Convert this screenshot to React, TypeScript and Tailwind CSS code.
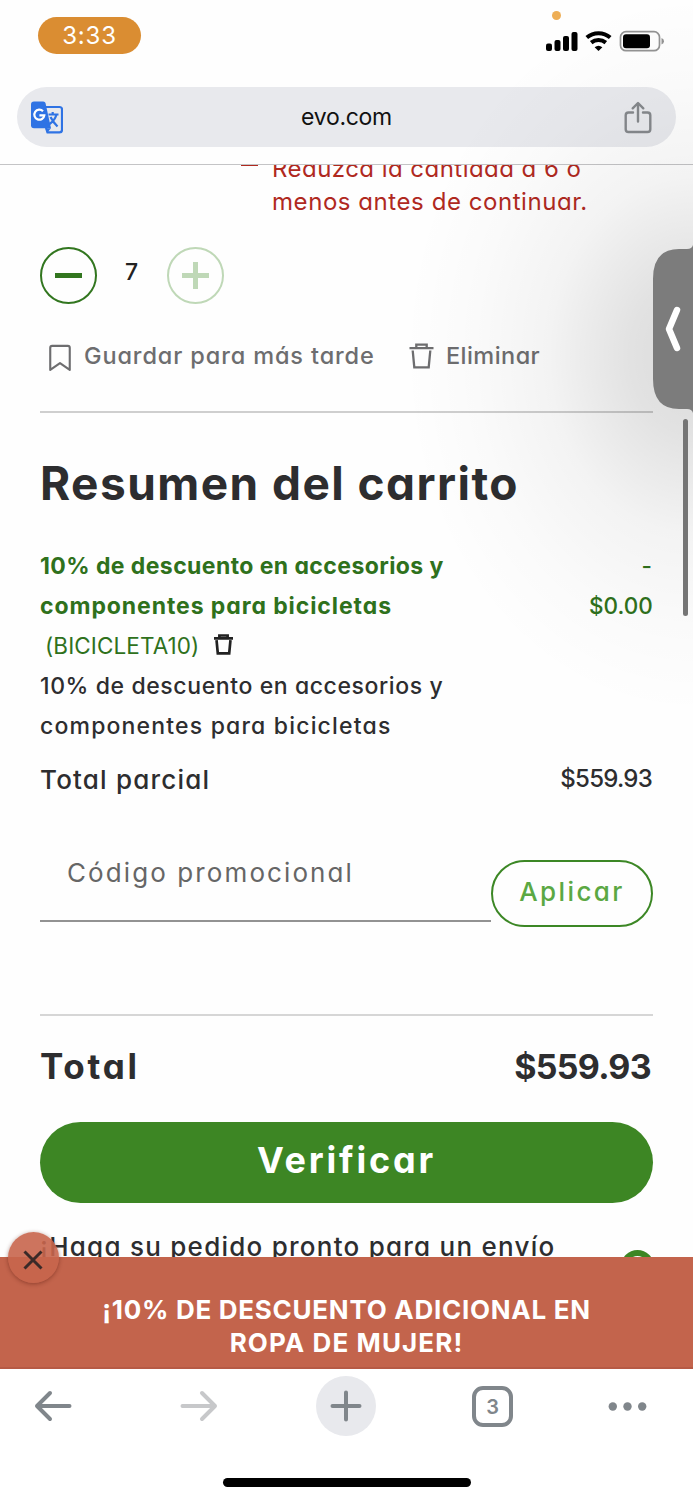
import React from 'react';

const StatusBar: React.FC = () => (
  <div className="relative flex h-[87px] shrink-0 items-start justify-between pl-[38px] pr-[28px]">
    <div className="mt-[17px] flex h-[37px] w-[103px] items-center justify-center rounded-full bg-[#da8d32] text-[24px] tracking-[0.8px] text-white">
      3:33
    </div>
    <span className="absolute left-[552px] top-[11px] h-[9px] w-[9px] rounded-full bg-[#eeae55]" />
    <div className="mt-[30px] flex items-center gap-[7px]">
      <svg width="33" height="22" viewBox="0 0 33 22">
        <rect x="1" y="13.5" width="6" height="7.5" rx="2" />
        <rect x="9.5" y="10" width="6" height="11" rx="2" />
        <rect x="18" y="6" width="6" height="15" rx="2" />
        <rect x="26.5" y="2" width="6" height="19" rx="2" />
      </svg>
      <svg width="27" height="22" viewBox="0 0 27 22" fill="none" stroke="#000" strokeWidth="4">
        <path d="M1.8 7.6C8.5 1.8 18.5 1.8 25.2 7.6" />
        <path d="M6.2 12.6C10.5 9.1 16.5 9.1 20.8 12.6" />
        <path d="M13.5 21L9.6 17.3Q13.5 14.3 17.4 17.3Z" fill="#000" stroke="none" />
      </svg>
      <svg width="46" height="22" viewBox="0 0 46 22">
        <rect x="1.5" y="1.7" width="39" height="19" rx="5.5" fill="none" stroke="#939393" strokeWidth="1.7" />
        <rect x="4" y="4.3" width="27" height="14" rx="3" />
        <path d="M42.5 8Q45 9 45 11.2Q45 13.4 42.5 14.4Z" fill="#939393" />
      </svg>
    </div>
  </div>
);

const AddressBar: React.FC = () => (
  <div className="h-[78px] shrink-0 border-b border-[#c4c4c6] px-[17px]">
    <div className="flex h-[60px] items-center justify-between rounded-full bg-[#e8e9ed] pl-[14px] pr-[24px]">
      <svg width="32" height="33" viewBox="0 0 32 33">
        <path d="M15 6H28.5Q31 6 31 8.5V28.8Q31 31.3 28.5 31.3H16.5L15 27" fill="#e8e9ed" stroke="#2f73e4" strokeWidth="2.2" />
        <path d="M3 .5H12.3Q14 .5 14.5 2L20 27.3H3Q0 27.3 0 24.3V3.5Q0 .5 3 .5Z" fill="#2f73e4" />
        <path d="M14.5 27.3H20L16 32Z" fill="#2f73e4" />
        <path d="M17.5 13.5H27.5M21.7 11V13.5M25.5 13.5Q23.8 19.5 18.5 23M19.5 16Q22 21 26.5 25.5" fill="none" stroke="#2f73e4" strokeWidth="2.2" />
        <path d="M12 10.3A5 5 0 1 0 13.3 14.3H8.4" fill="none" stroke="#fff" strokeWidth="2.2" />
      </svg>
      <span className="pl-[6px] text-[23px] tracking-[-0.3px] text-[#111]">evo.com</span>
      <svg width="28" height="33" viewBox="0 0 28 33" fill="none" stroke="#85888c" strokeWidth="2.4" strokeLinecap="round" strokeLinejoin="round">
        <path d="M9 11.5H4.5Q1.7 11.5 1.7 14.3V28.2Q1.7 31 4.5 31H23.5Q26.3 31 26.3 28.2V14.3Q26.3 11.5 23.5 11.5H19" />
        <path d="M14 20.5V2.5M8.7 7.3L14 2L19.3 7.3" />
      </svg>
    </div>
  </div>
);

const Trash: React.FC<{ className: string; stroke: number }> = ({ className, stroke }) => (
  <svg className={className} viewBox="0 0 24 26" fill="none" stroke="currentColor" strokeWidth={stroke}>
    <path d="M0 5.2H24M6.8 5.2V1.6H17.2V5.2M3.2 7.5L4.8 24.3H19.2L20.8 7.5" />
  </svg>
);

const CartItem: React.FC = () => (
  <section className="flex flex-col">
    <div className="relative -mt-[13px] ml-[232px] h-[66px] whitespace-nowrap text-[24px] leading-[33px] text-[#b0291f]">
      <span className="absolute -left-[31px] top-[12px] h-[2px] w-[17px] bg-[#b0291f]" />
      <p className="tracking-[0.46px]">Reduzca la cantidad a 6 o</p>
      <p className="tracking-[0.56px]">menos antes de continuar.</p>
    </div>
    <div className="mt-[29px] flex h-[57px] items-center">
      <button className="flex h-[57px] w-[57px] items-center justify-center rounded-full border-2 border-[#32761f]">
        <span className="h-[5px] w-[27px] bg-[#32761f]" />
      </button>
      <span className="-mt-[6px] w-[69px] text-center text-[23px] font-medium text-[#222]">7</span>
      <button className="ml-[1px] flex h-[57px] w-[57px] items-center justify-center rounded-full border-2 border-[#bfd8b7]">
        <svg width="27" height="27" viewBox="0 0 27 27" stroke="#bfd8b7" strokeWidth="5">
          <path d="M0 13.5H27M13.5 0V27" />
        </svg>
      </button>
    </div>
    <div className="mt-[37px] flex h-[30px] items-center pl-[9px] text-[23.5px] font-medium text-[#6d6d6f]">
      <svg className="mt-[3px]" width="22" height="28" viewBox="0 0 23 28" fill="none" stroke="currentColor" strokeWidth="2.2" strokeLinejoin="round">
        <path d="M1.3 26.5V3.3Q1.3 1.3 3.3 1.3H19.7Q21.7 1.3 21.7 3.3V26.5L11.5 19.3Z" />
      </svg>
      <span className="ml-[13px] w-[325px] whitespace-nowrap tracking-[0.88px]">Guardar para más tarde</span>
      <Trash className="h-[26px] w-[25px]" stroke={2.3} />
      <span className="ml-[12px] tracking-[0.45px]">Eliminar</span>
    </div>
    <hr className="mt-[40px] border-0 border-t-2 border-[#cfcfcf]" />
  </section>
);

const Summary: React.FC = () => (
  <section className="flex flex-col text-[#2d2d2f]">
    <h1 className="mt-[40px] h-[60px] whitespace-nowrap text-[46px] font-bold leading-[60px] tracking-[1.45px]">
      Resumen del carrito
    </h1>
    <div className="mt-[33px] flex justify-between text-[23px] leading-[40px]">
      <div className="whitespace-nowrap">
        <div className="font-bold text-[#2f711c]">
          <p className="tracking-[0.42px]">10% de descuento en accesorios y</p>
          <p className="tracking-[0.92px]">componentes para bicicletas</p>
        </div>
        <p className="flex items-center pl-[5px] text-[22.5px] text-[#2f711c]">
          <span className="tracking-[0.1px]">(BICICLETA10)</span>
          <Trash className="-mt-[4px] ml-[15px] h-[21px] w-[19px] text-[#222]" stroke={3.4} />
        </p>
        <div className="font-medium">
          <p className="tracking-[0.6px]">10% de descuento en accesorios y</p>
          <p className="tracking-[1.18px]">componentes para bicicletas</p>
        </div>
      </div>
      <div className="w-[64px] pr-[1px] text-right text-[22.5px] font-medium text-[#2f711c]">
        <p>-</p>
        <p>$0.00</p>
      </div>
    </div>
    <div className="mt-[13px] flex h-[40px] items-center justify-between text-[26px] font-medium">
      <span className="tracking-[1.2px]">Total parcial</span>
      <span className="pr-[1px] text-[24px] tracking-[-0.75px]">$559.93</span>
    </div>
    <div className="mt-[61px] flex h-[68px] items-start">
      <div className="h-[62px] w-[451px] border-b-2 border-[#929292] pl-[27px] text-[26px] leading-[25px] tracking-[2.1px] text-[#666]">
        Código promocional
      </div>
      <button className="h-[67px] w-[162px] rounded-full border-2 border-[#3c8725] pb-[4px] text-[26px] font-medium tracking-[2.4px] text-[#5ba843]">
        Aplicar
      </button>
    </div>
    <hr className="mt-[86px] border-0 border-t-2 border-[#d6d6d6]" />
    <div className="mt-[30px] flex h-[40px] items-center justify-between text-[35px] font-bold">
      <span className="tracking-[2.7px]">Total</span>
      <span className="pr-[2px] text-[34px] tracking-[-0.7px]">$559.93</span>
    </div>
    <button className="mt-[36px] h-[81px] rounded-full bg-[#3d8624] pb-[5px] text-[36px] font-bold tracking-[2.8px] text-white">
      Verificar
    </button>
    <div className="mt-[29px] flex h-[60px] items-start justify-between">
      <p className="whitespace-nowrap text-[26px] font-medium leading-[30px] tracking-[1.25px]">¡Haga su pedido pronto para un envío</p>
      <span className="-mr-[1px] mt-[18px] h-[33px] w-[33px] rounded-full border-[6px] border-[#3d8624]" />
    </div>
  </section>
);

const PromoBanner: React.FC = () => (
  <div className="relative flex h-[112px] shrink-0 flex-col items-center border-b-2 border-[#b65a45] bg-[#c3644c] pt-[36px] text-[26px] font-bold leading-[33px] text-white">
    <p className="whitespace-nowrap tracking-[0.73px]">¡10% DE DESCUENTO ADICIONAL EN</p>
    <p className="tracking-[1.1px]">ROPA DE MUJER!</p>
    <button className="absolute -top-[25px] left-[8px] flex h-[51px] w-[51px] items-center justify-center rounded-full bg-[#c8654d]/90 shadow-[0_1px_4px_rgba(80,20,10,0.45)]">
      <svg className="mr-[1px] mt-[4px]" width="20" height="20" viewBox="0 0 20 20" stroke="#3a2a28" strokeWidth="3">
        <path d="M1.5 1.5L18.5 18.5M18.5 1.5L1.5 18.5" />
      </svg>
    </button>
  </div>
);

const BottomBar: React.FC = () => (
  <nav className="relative h-[131px] shrink-0 bg-white pt-[7px]">
    <div className="flex h-[60px] items-center pl-[34px] text-[#80868b]">
      <svg width="38" height="32" viewBox="0 0 38 32" fill="none" stroke="currentColor" strokeWidth="4" strokeLinecap="round" strokeLinejoin="round">
        <path d="M35.5 16H3M16 3L3 16L16 29" />
      </svg>
      <svg className="ml-[108px]" width="38" height="32" viewBox="0 0 38 32" fill="none" stroke="#c7c8ca" strokeWidth="4" strokeLinecap="round" strokeLinejoin="round">
        <path d="M2.5 16H35M22 3L35 16L22 29" />
      </svg>
      <div className="ml-[98px] flex h-[60px] w-[60px] items-center justify-center rounded-full bg-[#e8e9ed]">
        <svg width="32" height="32" viewBox="0 0 32 32" stroke="currentColor" strokeWidth="4" strokeLinecap="round">
          <path d="M2.5 16H29.5M16 2.5V29.5" />
        </svg>
      </div>
      <div className="ml-[96px] flex h-[41px] w-[41px] items-center justify-center rounded-[11px] border-4 border-current pt-[2px] text-[20px] font-semibold">
        3
      </div>
      <svg className="ml-[95px]" width="39" height="9" viewBox="0 0 39 9" fill="currentColor">
        <circle cx="4.8" cy="4.5" r="4.2" />
        <circle cx="19.5" cy="4.5" r="4.2" />
        <circle cx="34.2" cy="4.5" r="4.2" />
      </svg>
    </div>
    <div className="mx-auto mt-[42px] h-[9px] w-[248px] rounded-full bg-black" />
  </nav>
);

const App: React.FC = () => {
  return (
    <div className="relative flex h-[1500px] w-[693px] flex-col overflow-hidden bg-[#fefefe] font-['Inter','Liberation_Sans',sans-serif] [font-feature-settings:'cv11']">
      <StatusBar />
      <AddressBar />
      <main className="min-h-0 flex-1 overflow-hidden px-[40px]">
        <CartItem />
        <Summary />
      </main>
      <PromoBanner />
      <BottomBar />

      {/* shade cast by the side handle */}
      <div className="pointer-events-none absolute right-0 top-0 h-[760px] w-[380px] bg-[radial-gradient(ellipse_290px_360px_at_100%_355px,rgba(0,0,0,0.14),rgba(0,0,0,0.11)_22%,rgba(0,0,0,0.045)_50%,rgba(0,0,0,0.014)_76%,transparent)]" />
      <svg className="absolute right-0 top-[244px]" width="40" height="170" viewBox="0 0 40 170">
        <path d="M40 1Q39 5 34 5H26Q0 5 0 35V135Q0 165 26 165H34Q39 165 40 169Z" fill="#7c7c7c" />
        <path d="M24 66L16 85L24 104" fill="none" stroke="#fff" strokeWidth="6.5" strokeLinecap="round" strokeLinejoin="round" />
      </svg>
      <div className="absolute right-[5px] top-[419px] h-[197px] w-[5px] rounded-full bg-[#757575]" />
    </div>
  );
};

export default App;
